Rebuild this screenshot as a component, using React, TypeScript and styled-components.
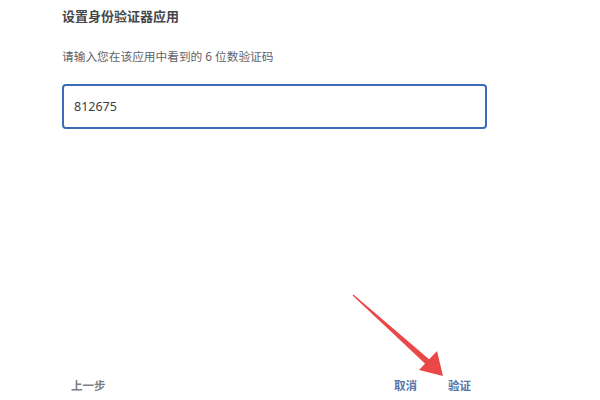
import styled, { createGlobalStyle } from 'styled-components'

const GlobalStyle = createGlobalStyle`
    html, body {
        margin: 0;
        padding: 0;
        background: #ffffff;
    }
    body {
        font-family: 'Noto Sans', 'Noto Sans CJK SC', sans-serif;
    }
`

const Page = styled.div`
    position: relative;
    width: 600px;
    height: 400px;
    display: flex;
    flex-direction: column;
    background: #ffffff;
    overflow: hidden;
`

const Content = styled.div`
    display: flex;
    flex-direction: column;
    padding: 6px 113px 0 62px;
`

const Title = styled.h2`
    margin: 0;
    font-size: 13px;
    line-height: 20px;
    font-weight: 700;
    color: #44474b;
`

const Hint = styled.p`
    margin: 20px 0 0;
    font-size: 11.7px;
    line-height: 20px;
    color: #5f6368;
`

const CodeInput = styled.input`
    margin-top: 18px;
    box-sizing: border-box;
    width: 100%;
    height: 45px;
    padding: 0 10px;
    border: 2px solid #3d6bb8;
    border-radius: 4px;
    font-family: 'Noto Sans', 'Noto Sans CJK SC', sans-serif;
    font-size: 12.5px;
    color: #3c4043;
    outline: none;
    background: #ffffff;
`

const Footer = styled.div`
    margin-top: auto;
    display: flex;
    align-items: center;
    padding: 0 120px 0 62px;
    height: 28px;
`

const Actions = styled.div`
    margin-left: auto;
    display: flex;
    gap: 13px;
`

const TextButton = styled.button<{ $tone?: 'grey' | 'blue' }>`
    border: none;
    background: transparent;
    padding: 0 9px;
    font-family: 'Noto Sans', 'Noto Sans CJK SC', sans-serif;
    font-size: 11.5px;
    font-weight: 700;
    line-height: 20px;
    color: ${p => (p.$tone === 'grey' ? '#7a7e84' : '#5676ab')};
    cursor: pointer;
`

const Arrow = styled.svg`
    position: absolute;
    left: 0;
    top: 0;
    pointer-events: none;
`

export default function App() {
    return (
        <Page>
            <GlobalStyle />
            <Content>
                <Title>设置身份验证器应用</Title>
                <Hint>请输入您在该应用中看到的 6 位数验证码</Hint>
                <CodeInput defaultValue="812675" />
            </Content>
            <Footer>
                <TextButton $tone="grey">上一步</TextButton>
                <Actions>
                    <TextButton>取消</TextButton>
                    <TextButton>验证</TextButton>
                </Actions>
            </Footer>
            {/* red annotation arrow */}
            <Arrow width="600" height="400" viewBox="0 0 600 400">
                <polygon points="352.6,295.4 353.4,294.6 430,360 426,364.4" fill="#ea4848" />
                <polygon points="443,376 419,370 437,351" fill="#ea4848" />
            </Arrow>
        </Page>
    )
}
